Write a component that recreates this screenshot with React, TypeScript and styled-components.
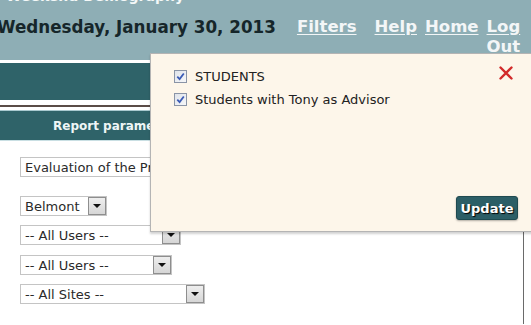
import React from "react";
import styled, { createGlobalStyle } from "styled-components";

const Global = createGlobalStyle`
  html, body { margin: 0; padding: 0; background: #ffffff; }
  body { width: 531px; height: 325px; overflow: hidden; font-family: "DejaVu Sans", Verdana, sans-serif; }
`;

const Page = styled.div`
  position: relative;
  width: 531px;
  height: 325px;
  overflow: hidden;
  background: #fff;
`;

const Header = styled.header`
  background: #8eaeb5;
  height: 60px;
  overflow: hidden;
`;

const SiteTitle = styled.div`
  margin-top: -12px;
  padding-left: 6px;
  height: 16px;
  line-height: 16px;
  font-size: 14px;
  font-weight: bold;
  color: #f4f8f8;
  white-space: nowrap;
`;

const DateRow = styled.div`
  display: flex;
  align-items: flex-start;
  margin-top: 13px;
`;

const DateText = styled.div`
  margin-left: -3px;
  font-size: 16.75px;
  font-weight: bold;
  line-height: 20px;
  color: #16262a;
  white-space: nowrap;
`;

const Nav = styled.nav`
  display: flex;
  align-items: flex-start;
  gap: 8px;
  margin-left: 21px;
`;

const NavLink = styled.a<{ $w?: number; $mr?: number }>`
  display: block;
  font-size: 16.5px;
  font-weight: bold;
  line-height: 20px;
  color: #f3f6f7;
  text-decoration: underline;
  text-underline-offset: 2px;
  white-space: ${(p) => (p.$w ? "normal" : "nowrap")};
  width: ${(p) => (p.$w ? `${p.$w}px` : "auto")};
  margin-right: ${(p) => p.$mr ?? 0}px;
`;

const Gap = styled.div<{ $h: number }>`
  height: ${(p) => p.$h}px;
  background: #fff;
`;

const Rule = styled.div<{ $h: number; $c: string }>`
  height: ${(p) => p.$h}px;
  background: ${(p) => p.$c};
`;

const DarkBar = styled.div`
  height: 37px;
  background: #2f6369;
`;

const ReportBar = styled.div`
  height: 29px;
  background: #2f6369;
  border-top: 1px solid #a9c9cf;
  border-bottom: 1px solid #c9dfe3;
  display: flex;
  align-items: center;
  padding-left: 53px;
  font-size: 12px;
  font-weight: bold;
  color: #eef6f6;
`;

const Content = styled.div`
  width: 503px;
  border-right: 1px solid #6a6a6a;
  padding: 16px 0 20px 20px;
  display: flex;
  flex-direction: column;
  align-items: flex-start;
`;

const SelectBox = styled.div<{ $w: number; $mt: number }>`
  box-sizing: border-box;
  width: ${(p) => p.$w}px;
  height: 20px;
  margin-top: ${(p) => p.$mt}px;
  border: 1px solid #c4c4c4;
  background: #fff;
  display: flex;
  align-items: center;
  justify-content: space-between;
  font-size: 13px;
  color: #2a2a2a;
  padding-left: 4px;
  white-space: nowrap;
  overflow: hidden;
`;

const ArrowBtn = styled.div`
  box-sizing: border-box;
  width: 18px;
  height: 18px;
  border: 1px solid #8e8e8e;
  background: linear-gradient(#eeeeee, #d6d6d6);
  display: flex;
  align-items: center;
  justify-content: center;
  flex-shrink: 0;
  &::after {
    content: "";
    border-left: 4px solid transparent;
    border-right: 4px solid transparent;
    border-top: 4px solid #111;
  }
`;

const Popup = styled.div`
  position: absolute;
  left: 150px;
  top: 53px;
  width: 385px;
  height: 179px;
  box-sizing: border-box;
  background: #fdf6ea;
  border: 1px solid #b4b4b4;
  box-shadow: 0 2px 2px rgba(0, 0, 0, 0.18);
  padding: 14px 16px 11px 23px;
  display: flex;
  flex-direction: column;
`;

const PopupTop = styled.div`
  display: flex;
  justify-content: space-between;
  align-items: flex-start;
  padding-right: 4px;
`;

const CheckList = styled.div`
  display: flex;
  flex-direction: column;
  gap: 6px;
`;

const CheckRow = styled.label`
  display: flex;
  align-items: center;
  gap: 8px;
  font-size: 13px;
  line-height: 17px;
  color: #222;
`;

const Check = styled.span`
  box-sizing: border-box;
  width: 13px;
  height: 13px;
  border: 1px solid #8a94a6;
  background: linear-gradient(135deg, #dfe3ea, #f6f7f9);
  display: flex;
  align-items: center;
  justify-content: center;
`;

const Close = styled.button`
  border: 0;
  background: transparent;
  padding: 0;
  margin-top: -3px;
  width: 16px;
  height: 16px;
  display: flex;
`;

const Footer = styled.div`
  margin-top: auto;
  display: flex;
  justify-content: flex-end;
`;

const UpdateBtn = styled.button`
  height: 24px;
  width: 62px;
  border: 1px solid #1f4a50;
  border-radius: 3px;
  background: #2c5e66;
  color: #fff;
  font-family: "DejaVu Sans", Verdana, sans-serif;
  font-size: 13px;
  font-weight: bold;
  padding: 0;
  text-shadow: 1px 1px 1px #000;
  box-shadow: 0 1px 2px rgba(0,0,0,0.3);
`;

const CheckMark = () => (
  <svg width="9" height="9" viewBox="0 0 9 9">
    <path d="M1.3 4.6 L3.6 7 L7.8 1.5" fill="none" stroke="#3b5bb5" strokeWidth="1.8" />
  </svg>
);

const Select = ({ w, mt, children }: { w: number; mt: number; children: React.ReactNode }) => (
  <SelectBox $w={w} $mt={mt}>
    <span>{children}</span>
    <ArrowBtn />
  </SelectBox>
);

export default function App() {
  return (
    <Page>
      <Global />
      <Header>
        <SiteTitle>Weekend Demography</SiteTitle>
        <DateRow>
          <DateText>Wednesday, January 30, 2013</DateText>
          <Nav>
            <NavLink href="#" $mr={10}>Filters</NavLink>
            <NavLink href="#">Help</NavLink>
            <NavLink href="#">Home</NavLink>
            <NavLink href="#" $w={36}>Log Out</NavLink>
          </Nav>
        </DateRow>
      </Header>
      <Gap $h={3} />
      <DarkBar />
      <Gap $h={5} />
      <Rule $h={2} $c="#5b4c47" />
      <Gap $h={3} />
      <ReportBar>Report parameters</ReportBar>
      <Content>
        <Select w={320} mt={0}>Evaluation of the Program</Select>
        <Select w={87} mt={19}>Belmont</Select>
        <Select w={161} mt={9}>-- All Users --</Select>
        <Select w={152} mt={10}>-- All Users --</Select>
        <Select w={185} mt={9}>-- All Sites --</Select>
      </Content>
      <Popup>
        <PopupTop>
          <CheckList>
            <CheckRow><Check><CheckMark /></Check>STUDENTS</CheckRow>
            <CheckRow><Check><CheckMark /></Check>Students with Tony as Advisor</CheckRow>
          </CheckList>
          <Close aria-label="close">
            <svg width="16" height="16" viewBox="0 0 16 16">
              <path d="M2.5 2.5 L13.5 13.5 M13.5 2.5 L2.5 13.5" stroke="#d22a2a" strokeWidth="2.4" strokeLinecap="round" />
            </svg>
          </Close>
        </PopupTop>
        <Footer>
          <UpdateBtn>Update</UpdateBtn>
        </Footer>
      </Popup>
    </Page>
  );
}
